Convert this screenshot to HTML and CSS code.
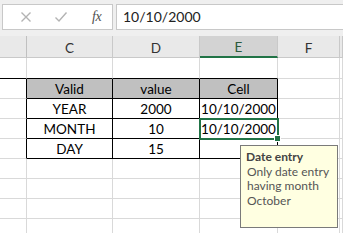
FILE: index.html
```html
<!DOCTYPE html>
<html lang="en">
<head>
  <meta charset="UTF-8" />
  <title>Date entry validation</title>
  <link rel="stylesheet" href="styles.css">
</head>
<body>
  <div class="formula-bar">
    <div class="fx-box">
      <svg class="icon" width="12" height="12" viewBox="0 0 12 12">
        <path d="M1.5 1.5 L10.5 10.5 M10.5 1.5 L1.5 10.5" stroke="#b3b3b3" stroke-width="1.4" fill="none"/>
      </svg>
      <svg class="icon" width="14" height="12" viewBox="0 0 14 12">
        <path d="M1.5 6.5 L5 10 L12.5 1.5" stroke="#b3b3b3" stroke-width="1.4" fill="none"/>
      </svg>
      <span class="fx">fx</span>
    </div>
    <div class="formula-input">10/10/2000</div>
  </div>

  <div class="sheet">
    <table class="grid">
      <colgroup>
        <col style="width:27px"><col style="width:86px"><col style="width:87px">
        <col style="width:78px"><col style="width:62px"><col>
      </colgroup>
      <tr class="col-heads">
        <th class="no-sep"></th><th>C</th><th>D</th><th class="active">E</th><th>F</th><th></th>
      </tr>
      <tr>
        <td class="top-edge"></td><td class="top-edge"></td><td class="top-edge"></td><td class="top-edge"></td><td></td><td></td>
      </tr>
      <tr>
        <td class="left-edge"></td><td class="head">Valid</td><td class="head">value</td><td class="head">Cell</td><td></td><td></td>
      </tr>
      <tr>
        <td class="left-edge"></td><td class="box">YEAR</td><td class="box">2000</td><td class="box">10/10/2000</td><td></td><td></td>
      </tr>
      <tr>
        <td class="left-edge"></td><td class="box">MONTH</td><td class="box">10</td><td class="box selected">10/10/2000</td><td></td><td></td>
      </tr>
      <tr>
        <td class="left-edge"></td><td class="box">DAY</td><td class="box">15</td><td class="box"></td><td></td><td></td>
      </tr>
      <tr><td></td><td></td><td></td><td></td><td></td><td></td></tr>
      <tr><td></td><td></td><td></td><td></td><td></td><td></td></tr>
      <tr><td></td><td></td><td></td><td></td><td></td><td></td></tr>
      <tr><td></td><td></td><td></td><td></td><td></td><td></td></tr>
    </table>

    <div class="tooltip">
      <p class="tip-title">Date entry</p>
      <p>Only date entry<br>having month<br>October</p>
    </div>
  </div>
</body>
</html>
```

FILE: styles.css
```css
* {
  margin: 0;
  padding: 0;
  box-sizing: border-box;
}
body {
  background: #fff;
  font-family: Lato, 'Liberation Sans', sans-serif;
  color: #000;
  overflow: hidden;
}
.formula-bar {
  display: flex;
  gap: 3px;
  height: 36px;
  padding: 4px 0 0 2px;
  background: #efefef;
}
.fx-box {
  width: 111px;
  height: 26px;
  background: #fff;
  border: 1px solid #c8c8c8;
  display: flex;
  align-items: center;
  padding-left: 17px;
}
.fx-box .icon + .icon {
  margin-left: 22px;
}
.fx {
  margin-left: 24px;
  font-family: 'Liberation Serif', serif;
  font-style: italic;
  font-size: 14px;
  color: #505050;
  letter-spacing: -0.5px;
}
.formula-input {
  flex: 1;
  height: 26px;
  background: #fff;
  border: 1px solid #c8c8c8;
  border-right: none;
  padding-left: 6px;
  font-size: 14px;
  line-height: 24px;
  color: #222;
}
.sheet {
  position: relative;
}
.grid {
  border-collapse: separate;
  border-spacing: 0;
  table-layout: fixed;
  width: 343px;
  font-size: 13.5px;
}
.grid td {
  height: 20px;
  border-right: 1px solid #d9d9d9;
  border-bottom: 1px solid #d9d9d9;
  text-align: center;
  line-height: 18px;
  padding: 1px 0 0;
  white-space: nowrap;
}
.col-heads th {
  height: 22px;
  background: #e9e9e9;
  border-right: 1px solid #c9c9c9;
  border-bottom: 1px solid #c9c9c9;
  font-weight: normal;
  font-size: 13.5px;
  color: #333;
  padding-top: 2px;
}
.col-heads th.no-sep {
  border-right-color: #c0c0c0;
}
.col-heads th.active {
  background: #d3d3d3;
  color: #2b5a3c;
  border-bottom: 2px solid #217346;
}
.grid tr:nth-child(2) td {
  height: 21px;
}
.grid td.top-edge {
  border-bottom-color: #000;
}
.grid td.left-edge {
  border-right-color: #000;
}
.grid td.box {
  border-right-color: #000;
  border-bottom-color: #000;
}
.grid td.head {
  background: #c0c0c0;
  border-right-color: #000;
  border-bottom-color: #000;
}
.grid td.selected {
  position: relative;
  outline: 2px solid #217346;
  outline-offset: -1px;
}
.grid td.selected::after {
  content: "";
  position: absolute;
  right: -4px;
  bottom: -4px;
  width: 5px;
  height: 5px;
  background: #217346;
  border: 1px solid #fff;
}
.tooltip {
  position: absolute;
  left: 240px;
  top: 109px;
  width: 98px;
  height: 83px;
  background: #ffffe1;
  border: 1px solid #7a7a7a;
  padding: 4px 0 0 6px;
  font-size: 12px;
  line-height: 14.5px;
  color: #555;
}
.tip-title {
  font-weight: bold;
  color: #444;
  margin-left: -1px;
}
```
